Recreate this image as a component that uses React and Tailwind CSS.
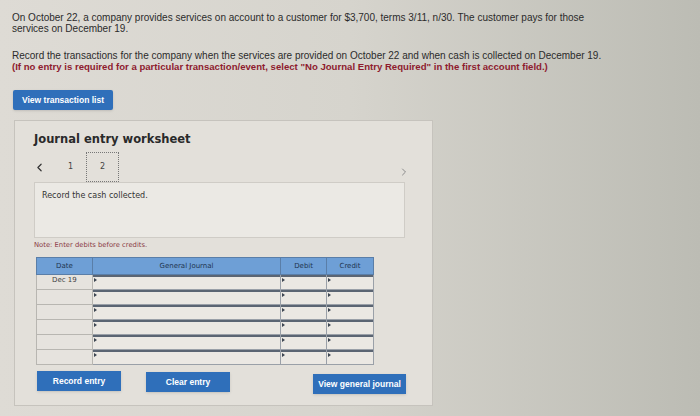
import React from 'react';
import { ChevronLeft, ChevronRight } from 'lucide-react';

const rows = ['Dec 19', '', '', '', '', ''];

const Cell = () => (
  <td className="border border-[#9aa0a8] p-0">
    <div className="relative h-[14px] border-t-[2px] border-[#5b6573] bg-[#ebe8e3]">
      <span className="absolute left-[1px] top-[1px] h-0 w-0 border-y-[2px] border-l-[3px] border-y-transparent border-l-[#3b4450]" />
    </div>
  </td>
);

const BlueButton = ({ children, className = '' }) => (
  <button
    className={`h-[20px] bg-[#2f6fba] text-[8.5px] font-bold text-white shadow-sm ${className}`}
    style={{ fontFamily: '"Liberation Sans", Arial, sans-serif' }}
  >
    {children}
  </button>
);

const App = () => {
  return (
    <div
      className="h-[416px] w-[700px] overflow-hidden bg-linear-to-r from-[#dedbd5] via-[#d6d4cd] to-[#bcbcb4] pl-[12px] pt-[12px] text-[#2b2b2b]"
      style={{ fontFamily: '"Liberation Sans", Arial, sans-serif' }}
    >
      {/* 문제 설명 */}
      <p className="w-[600px] text-[10px] leading-[11px]">
        On October 22, a company provides services on account to a customer for $3,700, terms 3/11, n/30. The customer pays for those
        services on December 19.
      </p>
      <p className="mt-[16px] text-[10px] leading-[11px]">
        Record the transactions for the company when the services are provided on October 22 and when cash is collected on December 19.
      </p>
      <p className="text-[9.6px] font-bold leading-[11px] text-[#8e1b2e]">
        (If no entry is required for a particular transaction/event, select "No Journal Entry Required" in the first account field.)
      </p>

      <BlueButton className="mt-[18px] ml-[1px] w-[100px] rounded-[2px]">View transaction list</BlueButton>

      {/* 워크시트 패널 */}
      <div className="mt-[10px] ml-[2px] h-[286px] w-[419px] border border-[#c6c3bd] bg-[#e3e0da] px-[19px] pt-[10px]">
        <h2
          className="text-[11.5px] font-bold text-[#2a2a2a]"
          style={{ fontFamily: '"DejaVu Sans", Verdana, sans-serif' }}
        >
          Journal entry worksheet
        </h2>

        <div
          className="mt-[4px] flex h-[30px] w-[372px] items-center text-[#444]"
          style={{ fontFamily: '"DejaVu Sans", Verdana, sans-serif' }}
        >
          <ChevronLeft size={13} strokeWidth={2.2} className="ml-[-1px] text-[#333]" />
          <span className="ml-[22px] text-[8px]">1</span>
          <div className="ml-[13px] flex h-[30px] w-[33px] items-center justify-center border border-dotted border-[#777] text-[8px]">
            2
          </div>
          <ChevronRight size={12} strokeWidth={2} className="ml-auto mr-[-4px] mt-[9px] text-[#8a8a8a]" />
        </div>

        <div
          className="h-[56px] w-[371px] border border-[#cfccc6] bg-[#ebe9e4] px-[7px] pt-[7px] text-[8px] text-[#333]"
          style={{ fontFamily: '"DejaVu Sans", Verdana, sans-serif' }}
        >
          Record the cash collected.
        </div>

        <p
          className="mt-[2px] text-[6.8px] text-[#8a3a45]"
          style={{ fontFamily: '"DejaVu Sans", Verdana, sans-serif' }}
        >
          Note: Enter debits before credits.
        </p>

        {/* 분개 테이블 */}
        <table
          className="mt-[7px] ml-[2px] w-[338px] border-collapse text-[7px]"
          style={{ fontFamily: '"DejaVu Sans", Verdana, sans-serif' }}
        >
          <thead>
            <tr className="h-[17px] bg-[#6e9fd6] text-[#1f3550]">
              <th className="w-[56px] border border-[#5a7ea8] font-normal">Date</th>
              <th className="w-[189px] border border-[#5a7ea8] font-normal">General Journal</th>
              <th className="w-[46px] border border-[#5a7ea8] font-normal">Debit</th>
              <th className="w-[47px] border border-[#5a7ea8] font-normal">Credit</th>
            </tr>
          </thead>
          <tbody>
            {rows.map((d, i) => (
              <tr key={i}>
                <td className="h-[15px] border border-[#b8b6b1] bg-[#e6e3de] text-center align-top text-[#444]">{d}</td>
                <Cell />
                <Cell />
                <Cell />
              </tr>
            ))}
          </tbody>
        </table>

        <div className="mt-[6px] flex items-start">
          <BlueButton className="ml-[3px] w-[84px]">Record entry</BlueButton>
          <BlueButton className="ml-[25px] mt-[1px] w-[84px]">Clear entry</BlueButton>
          <BlueButton className="ml-[83px] mt-[3px] w-[93px]">View general journal</BlueButton>
        </div>
      </div>
    </div>
  );
};

export default App;
